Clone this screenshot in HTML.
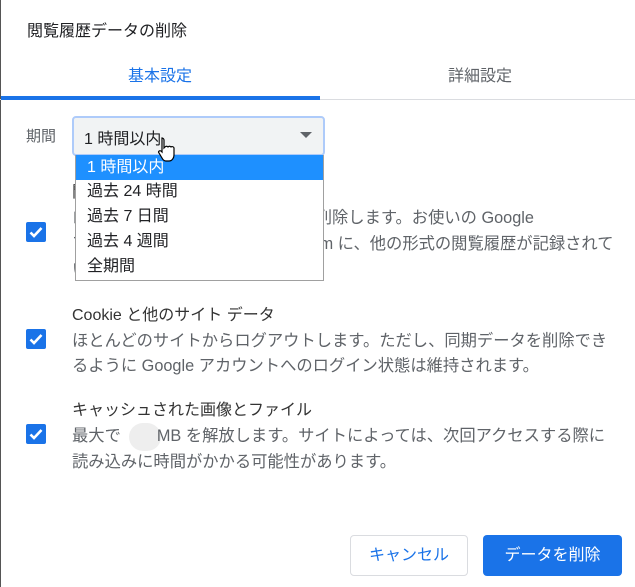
<!DOCTYPE html>
<html><head><meta charset="utf-8"><style>
*{margin:0;padding:0;box-sizing:border-box}
body{width:635px;height:587px;background:#fff;font-family:"Liberation Sans","Noto Sans CJK JP",sans-serif;position:relative;overflow:hidden;color:#202124}
.a{position:absolute;white-space:nowrap}
.t{font-size:16px;color:#333}
.d{font-size:16.3px;color:#5f6368}
.cb{position:absolute;left:26px;width:20px;height:20px;background:#1a73e8;border-radius:2px}
.cb svg{position:absolute;left:2px;top:2px}
.opt{position:absolute;left:0;width:100%;height:25px;padding-left:11px;font-size:16px;line-height:25px;color:#202124}
</style></head><body>
<div class="a" style="left:0;top:0;width:1px;height:587px;background:#555"></div>
<div class="a" style="left:27px;top:17px;font-size:16px;color:#202124">閲覧履歴データの削除</div>
<div class="a" style="left:128px;top:62px;font-size:16px;color:#1a73e8">基本設定</div>
<div class="a" style="left:448px;top:62px;font-size:16px;color:#5f6368">詳細設定</div>
<div class="a" style="left:0;top:99px;width:635px;height:1px;background:#dadce0"></div>
<div class="a" style="left:1px;top:96px;width:319px;height:4px;background:#1a73e8"></div>
<div class="a d" style="left:26px;top:125px;font-size:15px">期間</div>
<div class="a" style="left:72px;top:116px;width:253px;height:40px;background:#f1f3f4;border:2px solid #aecbfa;border-radius:4px"></div>
<div class="a" style="left:84px;top:125px;font-size:16px;color:#202124">1 時間以内</div>
<div class="a" style="left:300px;top:132px;width:0;height:0;border-left:6px solid transparent;border-right:6px solid transparent;border-top:6px solid #5f6368"></div>

<div class="a t" style="left:72px;top:178px">閲覧履歴</div>
<div class="a d" style="left:72px;top:204px">ログイン済みのデバイスの履歴を削除します。お使いの Google</div>
<div class="a d" style="left:72px;top:230px">アカウントの myactivity.google.com に、他の形式の閲覧履歴が記録されて</div>
<div class="a d" style="left:72px;top:256px">いる場合があります。</div>
<div class="cb" style="top:222px"><svg width="16" height="16" viewBox="0 0 16 16"><path d="M2.5 8.5l3.5 3.5 7.5-8" stroke="#fff" stroke-width="2.6" fill="none"/></svg></div>

<div class="a" style="left:75px;top:155px;width:249px;height:126px;background:#fff;border:1px solid #a0a0a0;border-top:none">
<div class="opt" style="top:-1px;background:#1e90ff;color:#fff;top:0">1 時間以内</div>
<div class="opt" style="top:24px">過去 24 時間</div>
<div class="opt" style="top:49px">過去 7 日間</div>
<div class="opt" style="top:74px">過去 4 週間</div>
<div class="opt" style="top:99px">全期間</div>
</div>
<svg class="a" style="left:157px;top:136px" width="20" height="28" viewBox="0 0 20 28"><path d="M5 2c1 0 2 1 2 2v8l1-1c1-1 2-1 3 0 1-1 2-1 3 0 1-1 3 0 3 1v7c0 3-2 6-5 6H9c-2 0-3-1-4-3l-3-5c-1-1 0-3 2-2l1 1V4c0-1 0-2 0-2z" fill="#fff" stroke="#000" stroke-width="1.2"/></svg>

<div class="a t" style="left:72px;top:301px">Cookie と他のサイト データ</div>
<div class="a d" style="left:72px;top:327px">ほとんどのサイトからログアウトします。ただし、同期データを削除でき</div>
<div class="a d" style="left:72px;top:352px">るように Google アカウントへのログイン状態は維持されます。</div>
<div class="cb" style="top:329px"><svg width="16" height="16" viewBox="0 0 16 16"><path d="M2.5 8.5l3.5 3.5 7.5-8" stroke="#fff" stroke-width="2.6" fill="none"/></svg></div>

<div class="a t" style="left:72px;top:396px">キャッシュされた画像とファイル</div>
<div class="a d" style="left:72px;top:422px">最大で<span style="display:inline-block;width:32px;height:28px;vertical-align:middle;background:#eee;border-radius:14px;margin:0 -4px 0 8px"></span>MB を解放します。サイトによっては、次回アクセスする際に</div>
<div class="a d" style="left:72px;top:448px">読み込みに時間がかかる可能性があります。</div>
<div class="cb" style="top:424px"><svg width="16" height="16" viewBox="0 0 16 16"><path d="M2.5 8.5l3.5 3.5 7.5-8" stroke="#fff" stroke-width="2.6" fill="none"/></svg></div>

<div class="a" style="left:350px;top:535px;width:118px;height:41px;border:1px solid #dadce0;border-radius:4px;color:#1a73e8;font-size:16px;text-align:center;line-height:39px">キャンセル</div>
<div class="a" style="left:483px;top:535px;width:139px;height:41px;background:#1a73e8;border-radius:4px;color:#fff;font-size:16px;text-align:center;line-height:41px">データを削除</div>
</body></html>
